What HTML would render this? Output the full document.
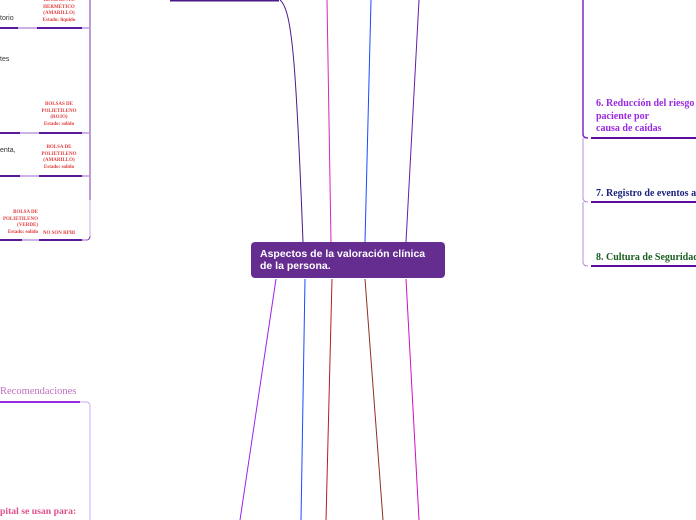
<!DOCTYPE html>
<html><head><meta charset="utf-8"><style>
html,body{margin:0;padding:0;width:696px;height:520px;overflow:hidden;background:#fff;position:relative;font-family:"Liberation Sans",sans-serif}
.t{position:absolute;white-space:nowrap}
.r{position:absolute;color:#e03c3c;font-family:"Liberation Serif",serif;font-weight:bold;font-size:5px;line-height:6.5px;text-align:center;width:60px}
.s{position:absolute;font-family:"Liberation Serif",serif;font-weight:bold;white-space:nowrap}
</style></head><body>
<svg width="696" height="520" style="position:absolute;left:0;top:0" fill="none">
<path d="M170 0.5 H279" stroke="#4a1a8a" stroke-width="2"/>
<path d="M280 0 C292 10 296 60 303 242" stroke="#4a1a8a" stroke-width="1"/>
<path d="M327 0 L331 242" stroke="#e020c0" stroke-width="1"/>
<path d="M371 0 L365 242" stroke="#1a4aff" stroke-width="1"/>
<path d="M419 0 L406 242" stroke="#6a1aaa" stroke-width="1"/>
<path d="M276 279 L240 520" stroke="#a020f0" stroke-width="1"/>
<path d="M305 279 L301 520" stroke="#1a4aff" stroke-width="1"/>
<path d="M332 279 L326 520" stroke="#b02020" stroke-width="1"/>
<path d="M365 279 L383 520" stroke="#903020" stroke-width="1"/>
<path d="M406 279 L419 520" stroke="#d010c0" stroke-width="1"/>
<path d="M90 0 V236 Q90 240 86 240" stroke="#7a3ab0" stroke-width="1"/>
<path d="M90 200 V236" stroke="#c8a8e0" stroke-width="1"/>
<g stroke-width="1.5">
<path d="M0 28 H18 M37 28 H82" stroke="#5a1a9a" stroke-width="2"/><path d="M18 28 H37 M82 28 H90" stroke="#b898d8"/>
<path d="M0 133 H20 M39 133 H82" stroke="#5a1a9a" stroke-width="2"/><path d="M20 133 H39 M82 133 H90" stroke="#b898d8"/>
<path d="M0 176 H20 M39 176 H82" stroke="#5a1a9a" stroke-width="2"/><path d="M20 176 H39 M82 176 H90" stroke="#b898d8"/>
<path d="M0 240 H22 M39 240 H82" stroke="#5a1a9a" stroke-width="2"/><path d="M22 240 H39 M82 240 H88" stroke="#b898d8"/>
</g>
<path d="M0 402 H80" stroke="#9a2ae0" stroke-width="2"/>
<path d="M80 402 H86 Q90 402 90 406 V520" stroke="#d0a8f0" stroke-width="1"/>
<path d="M583 0 V134 Q583 138 588 138" stroke="#7a2acc" stroke-width="1.5"/>
<path d="M583 138 V198 Q583 202 588 202 M583 202 V262 Q583 266 588 266" stroke="#b090d8" stroke-width="1"/>
<path d="M591 138 H696 M591 202 H696 M591 266 H696" stroke="#5a0aa0" stroke-width="2"/>
</svg>
<div class="t" style="left:0;top:15px;font-size:7px;color:#333">torio</div>
<div class="t" style="left:0;top:56px;font-size:7px;color:#333">tes</div>
<div class="t" style="left:0;top:147px;font-size:7px;color:#333">enta,</div>
<div class="r" style="left:29px;top:-2px">RECIPIENTE<br>HERMÉTICO<br>(AMARILLO)<br>Estado: liquido</div>
<div class="r" style="left:29px;top:102px">BOLSAS DE<br>POLIETILENO<br>(ROJO)<br>Estado: solido</div>
<div class="r" style="left:29px;top:145px">BOLSA DE<br>POLIETILENO<br>(AMARILLO)<br>Estado: solido</div>
<div class="r" style="left:-22px;top:210px;text-align:right">BOLSA DE<br>POLIETILENO<br>(VERDE)<br>Estado: solido</div>
<div class="r" style="left:29px;top:231px">NO SON RPBI</div>
<div class="s" style="left:0;top:386px;font-size:10.5px;color:#c070c0;font-weight:normal">Recomendaciones</div>
<div class="s" style="left:0;top:506px;font-size:9.7px;color:#e0508a">pital se usan para:</div>
<div style="position:absolute;left:251px;top:242px;width:194px;height:36px;background:#662d91;border-radius:4px"></div>
<div class="t" style="left:260px;top:248px;font-size:10.5px;line-height:12px;font-weight:bold;color:#fff">Aspectos de la valoración clínica<br>de la persona.</div>
<div class="s" style="left:596px;top:98px;font-size:10px;line-height:12.5px;color:#9a2ae0">6. Reducción del riesgo<br>paciente por<br>causa de caídas</div>
<div class="s" style="left:596px;top:188px;font-size:10px;color:#1a237e">7. Registro de eventos ad</div>
<div class="s" style="left:596px;top:252px;font-size:10px;color:#1b5e20">8. Cultura de Seguridad</div>
</body></html>
